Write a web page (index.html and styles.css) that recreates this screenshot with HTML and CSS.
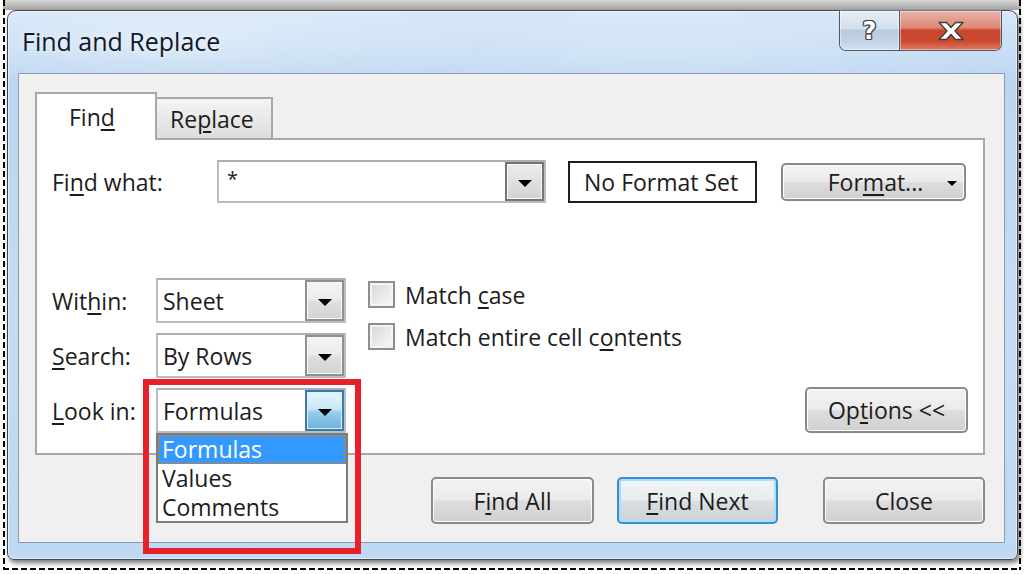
FILE: index.html
```html
<!DOCTYPE html>
<html lang="en">
<head>
<meta charset="utf-8">
<title>Find and Replace</title>
<link rel="stylesheet" href="styles.css">
</head>
<body>
<div class="stage">
  <div class="shot">
    <div class="window">
      <div class="titlebar">
        <div class="title">Find and Replace</div>
        <div class="capbtns">
          <div class="cap help">?</div>
          <div class="cap close">
            <svg width="30" height="20" viewBox="0 0 30 20"><polygon points="3,1.5 10.5,1.5 15,6.5 19.5,1.5 27,1.5 19,10 27,18.5 19.5,18.5 15,13.5 10.5,18.5 3,18.5 11,10" fill="#fff" stroke="#3e3e3e" stroke-width="1.4" stroke-linejoin="round"/></svg>
          </div>
        </div>
      </div>
      <div class="client">
        <div class="tabs">
          <div class="tab active">Fin<u>d</u></div>
          <div class="tab inactive">Re<u>p</u>lace</div>
        </div>
        <div class="panel">
          <div class="row1">
            <div class="label lbl-find">Fi<u>n</u>d what:</div>
            <div class="combo combo-find">
              <div class="val star">*</div>
              <div class="drop dark"><span class="tri"></span></div>
            </div>
            <div class="noformat">No Format Set</div>
            <div class="btn btn-format"><span>For<u>m</u>at...</span><span class="tri-sm"></span></div>
          </div>
          <div class="lower">
            <div class="opts">
              <div class="label">Wit<u>h</u>in:</div>
              <div class="combo">
                <div class="val">Sheet</div>
                <div class="drop"><span class="tri"></span></div>
              </div>
              <div class="label"><u>S</u>earch:</div>
              <div class="combo">
                <div class="val">By Rows</div>
                <div class="drop"><span class="tri"></span></div>
              </div>
              <div class="label"><u>L</u>ook in:</div>
              <div class="combo combo-look">
                <div class="val">Formulas</div>
                <div class="drop blue"><span class="tri"></span></div>
                <div class="list">
                  <div class="item sel">Formulas</div>
                  <div class="item">Values</div>
                  <div class="item">Comments</div>
                </div>
              </div>
            </div>
            <div class="checks">
              <div class="check"><span class="box"></span><span>Match <u>c</u>ase</span></div>
              <div class="check"><span class="box"></span><span>Match entire cell c<u>o</u>ntents</span></div>
            </div>
            <div class="btn btn-options">Op<u>t</u>ions &lt;&lt;</div>
          </div>
        </div>
        <div class="actions">
          <div class="btn btn-findall">F<u>i</u>nd All</div>
          <div class="btn btn-findnext"><u>F</u>ind Next</div>
          <div class="btn btn-close">Close</div>
        </div>
      </div>
    </div>
  </div>
  <div class="annot"></div>
</div>
</body>
</html>
```

FILE: styles.css
```css
* { box-sizing: border-box; }
html, body { margin: 0; padding: 0; }
body {
  background: #fff;
  font-family: "Open Sans", "Noto Sans", "DejaVu Sans", sans-serif;
  font-size: 23px;
  color: #1c1c1c;
}
u {
  text-decoration: underline;
  text-decoration-thickness: 2px;
  text-underline-offset: 3px;
}
.stage {
  position: relative;
  width: 1024px;
  height: 574px;
  overflow: hidden;
  padding-left: 3px;
}
.shot {
  width: 1018px;
  height: 570px;
  padding: 10px 3px 0 4px;
  background:
    repeating-linear-gradient(180deg, #000 0 6px, transparent 6px 9px) left top / 2px 100% no-repeat,
    repeating-linear-gradient(180deg, #000 0 6px, transparent 6px 9px) right top / 2px 100% no-repeat,
    repeating-linear-gradient(90deg, #000 0 6px, transparent 6px 9px) left bottom / 100% 2px no-repeat,
    linear-gradient(#d6d6d6, #a4a4a4) left top / 100% 10px no-repeat,
    #fff;
}
.window {
  height: 550px;
  border: 1px solid #3f4650;
  border-radius: 9px 9px 7px 7px;
  padding: 0 12px 16px 10px;
  display: flex;
  flex-direction: column;
  background:
    radial-gradient(ellipse 300px 60px at 180px 30px, rgba(255,255,255,.35), rgba(255,255,255,0)),
    radial-gradient(ellipse 380px 50px at 650px 40px, rgba(255,255,255,.25), rgba(255,255,255,0)),
    linear-gradient(180deg, #d7e7f8 0px, #c6ddf4 40px, #bcd6f1 70px, #c4dcf4 300px, #bfd9f3 100%);
  box-shadow: 2px 3px 5px rgba(0,0,0,.55), inset 0 0 0 1px rgba(255,255,255,.55);
}
.titlebar {
  height: 62px;
  display: flex;
  justify-content: space-between;
  flex: none;
}
.title {
  align-self: center;
  padding-left: 4px;
  padding-bottom: 2px;
  font-size: 25px;
  color: #101828;
  text-shadow: 0 0 8px rgba(255,255,255,.9);
}
.capbtns {
  display: flex;
  align-self: flex-start;
  margin-top: -1px;
  margin-right: 3px;
  height: 41px;
  border: 1px solid #4b5868;
  border-top-color: #6b7888;
  border-radius: 0 0 7px 7px;
  overflow: hidden;
}
.cap {
  display: flex;
  align-items: center;
  justify-content: center;
  box-shadow: inset 0 0 0 1px rgba(255,255,255,.45);
}
.help {
  width: 60px;
  border-right: 1px solid #4b5868;
  background: linear-gradient(180deg, #e6eef6 0%, #d3dfec 45%, #b9cbdf 50%, #c3d4e6 80%, #d6e3f0 100%);
  font-family: "DejaVu Sans", sans-serif;
  font-weight: bold;
  font-size: 24px;
  color: #fff;
  text-shadow: 1.2px 0 #454545, -1.2px 0 #454545, 0 1.2px #454545, 0 -1.2px #454545, 1px 1px #454545, -1px -1px #454545, 1px -1px #454545, -1px 1px #454545;
}
.close {
  width: 101px;
  background: linear-gradient(180deg, #eab2a5 0%, #dc8a77 42%, #c9462e 50%, #cc4a30 78%, #e07a60 100%);
}
.client {
  flex: 1;
  border: 1px solid #8f9aa8;
  background: #f0f0f0;
  padding: 18px 19px 18px 16px;
  display: flex;
  flex-direction: column;
}
.tabs {
  height: 46px;
  display: flex;
  align-items: flex-end;
  flex: none;
}
.tab {
  border: 2px solid #a5a8ad;
  border-bottom: none;
}
.tab.active {
  position: relative;
  z-index: 2;
  width: 122px;
  height: 48px;
  margin-bottom: -2px;
  background: #fff;
  padding: 6px 0 0 32px;
  line-height: 34px;
}
.tab.inactive {
  width: 118px;
  height: 41px;
  margin-left: -2px;
  background: linear-gradient(180deg, #f4f4f4 0%, #e9e9e9 50%, #dcdcdc 100%);
  padding: 3px 0 0 13px;
  line-height: 34px;
}
.panel {
  position: relative;
  z-index: 1;
  height: 317px;
  border: 2px solid #a5a8ad;
  background: #fff;
  padding: 20px 15px 20px 15px;
  flex: none;
}
.row1 {
  display: flex;
  align-items: center;
  height: 43px;
}
.label {
  display: flex;
  align-items: center;
}
.lbl-find { width: 165px; }
.combo {
  position: relative;
  display: flex;
  height: 45px;
  border: 2px solid #b9bcc2;
  border-top-color: #abaeb4;
  background: #fff;
}
.combo-find {
  width: 329px;
  height: 43px;
}
.val {
  flex: 1;
  display: flex;
  align-items: center;
  padding-left: 5px;
}
.val.star { padding-left: 8px; padding-bottom: 6px; font-size: 20px; }
.drop {
  width: 39px;
  border: 2px solid #8f9092;
  box-shadow: inset 0 0 0 1px #f8f8f8;
  background: linear-gradient(180deg, #f4f4f4 0%, #ececec 45%, #dedede 55%, #d3d3d3 100%);
  display: flex;
  align-items: center;
  justify-content: center;
}
.drop.dark {
  border-color: #747476;
  background: linear-gradient(180deg, #ececec 0%, #e0e0e0 50%, #d2d2d2 100%);
}
.drop.blue {
  border-color: #3c78a8;
  box-shadow: inset 0 0 0 1px #d8f0fc;
  background: linear-gradient(180deg, #e6f5fd 0%, #c8e7f7 45%, #96cdec 55%, #6cb2da 100%);
}
.tri {
  width: 0;
  height: 0;
  border-left: 7px solid transparent;
  border-right: 7px solid transparent;
  border-top: 7px solid #000;
  margin-top: 3px;
}
.noformat {
  width: 189px;
  height: 42px;
  margin-left: 22px;
  border: 2px solid #1e1e1e;
  display: flex;
  align-items: center;
  padding-left: 14px;
}
.btn {
  display: flex;
  align-items: center;
  justify-content: center;
  border: 2px solid #8a8a8a;
  border-radius: 5px;
  box-shadow: inset 0 0 0 1px #fbfbfb;
  background: linear-gradient(180deg, #f3f3f3 0%, #ebebeb 48%, #dddddd 52%, #d0d0d0 100%);
}
.btn-format {
  width: 185px;
  height: 38px;
  margin-left: 24px;
  position: relative;
  padding-left: 4px;
}
.tri-sm {
  position: absolute;
  right: 7px;
  top: 16px;
  width: 0;
  height: 0;
  border-left: 5px solid transparent;
  border-right: 5px solid transparent;
  border-top: 5px solid #000;
}
.lower {
  display: flex;
  margin-top: 75px;
  height: 155px;
}
.opts {
  display: grid;
  grid-template-columns: 104px 190px;
  grid-auto-rows: 45px;
  row-gap: 10px;
}
.checks {
  margin-left: 22px;
  padding-top: 3px;
  display: flex;
  flex-direction: column;
  gap: 15px;
}
.check {
  display: flex;
  align-items: center;
  height: 27px;
  gap: 10px;
}
.box {
  width: 27px;
  height: 27px;
  border: 2px solid #8e8f8f;
  box-shadow: inset 0 0 0 2px #f4f4f4;
  background: linear-gradient(135deg, #d6d6d6 0%, #ececec 60%, #f6f6f6 100%);
}
.btn-options {
  width: 163px;
  height: 46px;
  margin-left: auto;
  align-self: flex-end;
}
.list {
  position: absolute;
  z-index: 5;
  left: -2px;
  top: 43px;
  width: 192px;
  height: 90px;
  border: 2px solid #7c7c7c;
  background: #fff;
  padding: 0;
}
.item {
  height: 29px;
  line-height: 29px;
  padding-left: 4px;
}
.item.sel {
  background: #3399ff;
  color: #fff;
  outline: 2px dotted #b8834a;
  outline-offset: -2px;
}
.actions {
  display: flex;
  justify-content: flex-end;
  margin-top: 22px;
  margin-right: 0;
  height: 47px;
  flex: none;
}
.btn-findall { width: 163px; }
.btn-findnext {
  width: 161px;
  margin-left: 23px;
  border-color: #3a8fd0;
  box-shadow: inset 0 0 0 2px #a9def7;
  background: linear-gradient(180deg, #f1f5f8 0%, #e8ecef 48%, #d9dee2 52%, #ccd2d6 100%);
}
.btn-close {
  width: 162px;
  margin-left: 45px;
}
.annot {
  position: absolute;
  z-index: 10;
  left: 143px;
  top: 379px;
  width: 218px;
  height: 175px;
  border: 6px solid #e8202a;
  pointer-events: none;
}
```
